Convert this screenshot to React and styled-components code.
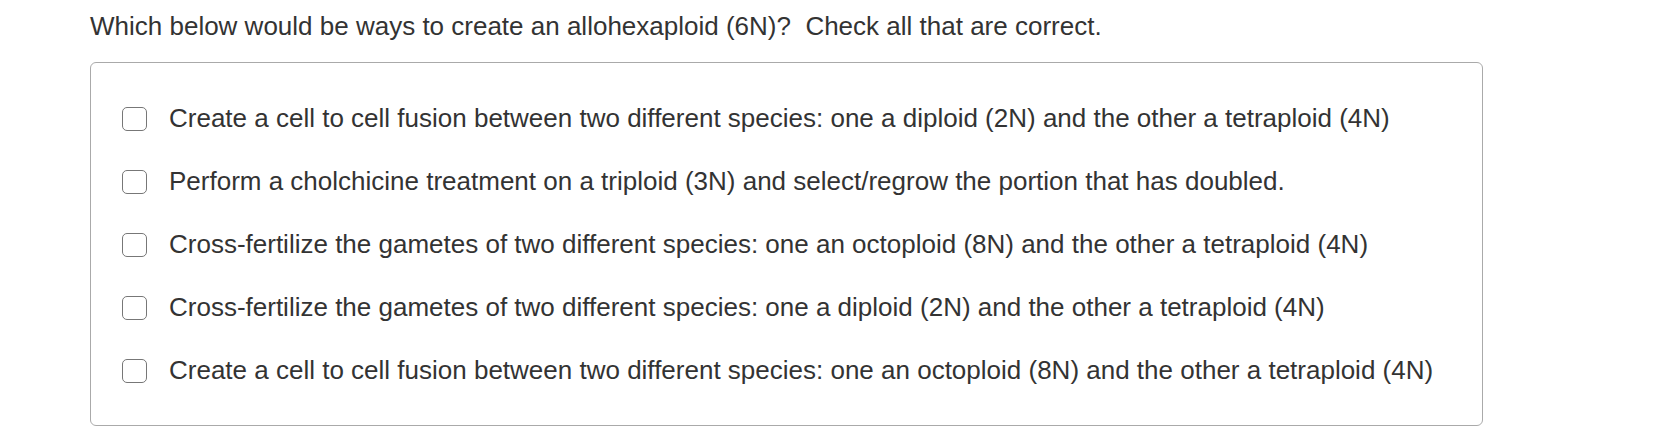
import React from 'react';
import styled, { createGlobalStyle } from 'styled-components';

const GlobalStyle = createGlobalStyle`
  body {
    margin: 0;
    background: #fff;
    font-family: 'Liberation Sans', Arial, sans-serif;
    color: #333;
  }
`;

const Page = styled.div`
  padding: 11px 0 0 90px;
`;

const Question = styled.p`
  margin: 0;
  font-size: 26px;
  line-height: 30px;
`;

const Box = styled.div`
  margin-top: 21px;
  width: 1391px;
  box-sizing: content-box;
  border: 1px solid #aaa;
  border-radius: 6px;
  padding: 24px 0 23px;
`;

const Row = styled.label`
  display: flex;
  align-items: center;
  height: 63px;
  padding-left: 31px;
  font-size: 26px;
  cursor: pointer;
`;

const Check = styled.input.attrs({ type: 'checkbox' })`
  appearance: none;
  margin: 0 22px 0 0;
  width: 25px;
  height: 24px;
  box-sizing: border-box;
  border: 1.5px solid #777;
  border-radius: 5px;
  background: #fff;
  flex-shrink: 0;
`;

const options = [
  'Create a cell to cell fusion between two different species: one a diploid (2N) and the other a tetraploid (4N)',
  'Perform a cholchicine treatment on a triploid (3N) and select/regrow the portion that has doubled.',
  'Cross-fertilize the gametes of two different species: one an octoploid (8N) and the other a tetraploid (4N)',
  'Cross-fertilize the gametes of two different species: one a diploid (2N) and the other a tetraploid (4N)',
  'Create a cell to cell fusion between two different species: one an octoploid (8N) and the other a tetraploid (4N)',
];

export default function App() {
  return (
    <>
      <GlobalStyle />
      <Page>
        <Question>Which below would be ways to create an allohexaploid (6N)?&nbsp; Check all that are correct.</Question>
        <Box>
          {options.map((o) => (
            <Row key={o}>
              <Check />
              <span>{o}</span>
            </Row>
          ))}
        </Box>
      </Page>
    </>
  );
}
